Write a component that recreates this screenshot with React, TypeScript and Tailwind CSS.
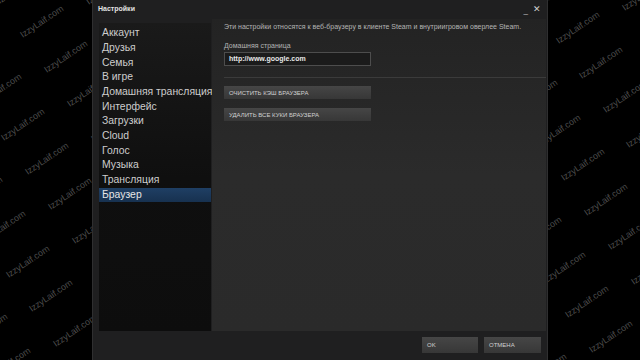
import React from 'react';

const NAV = [
  'Аккаунт',
  'Друзья',
  'Семья',
  'В игре',
  'Домашняя трансляция',
  'Интерфейс',
  'Загрузки',
  'Cloud',
  'Голос',
  'Музыка',
  'Трансляция',
  'Браузер',
];

// watermark lattice, measured from the screenshot
const marks: { x: number; y: number }[] = [];
for (let i = -14; i <= 14; i++) {
  for (let j = -3; j <= 9; j++) {
    const x = 42 + i * 23.5 + j * 89.3;
    const y = 22 + i * 34.5 + j * 1;
    if (x > -50 && x < 690 && y > -30 && y < 390) marks.push({ x, y });
  }
}

const Watermarks: React.FC = () => (
  <>
    {marks.map((m, idx) => (
      <div
        key={idx}
        className="absolute text-[9px] leading-none text-[#4e4e4e] whitespace-nowrap"
        style={{ left: m.x, top: m.y, transform: 'translate(-50%, -50%) rotate(-34deg)' }}
      >
        IzzyLaif.com
      </div>
    ))}
  </>
);

const GreyButton: React.FC<{ label: string; className?: string }> = ({ label, className }) => (
  <div
    className={`flex items-center bg-gradient-to-b from-[#464646] to-[#373737] text-[#d0d0d0] text-[6px] leading-none uppercase ${className ?? ''}`}
  >
    {label}
  </div>
);

export default function App() {
  return (
    <div className="relative w-[640px] h-[360px] bg-black overflow-hidden font-['Liberation_Sans',Arial,sans-serif]">
      <Watermarks />

      <div className="relative flex h-full pl-[92px]">
        <div className="w-[456px] h-full flex flex-col bg-[#1f1f20] border-l border-r border-[#2f2f30]">
          {/* title bar */}
          <div className="h-[19px] flex items-center justify-between pl-[5px] pr-[6px]">
            <span className="text-[7px] font-bold text-[#e2e2e2]">Настройки</span>
            <div className="flex items-center gap-[5px] text-[#cfcfcf]">
              <span className="text-[8px] leading-none mt-[3px]">_</span>
              <span className="text-[9px] leading-none">✕</span>
            </div>
          </div>

          {/* body */}
          <div className="flex-1 flex pl-[6px] pr-[1px]">
            <div className="w-[112px] mt-[4px] bg-gradient-to-b from-[#1a1a1a] via-[#0f0f0f] to-[#0d0d0d] pt-[3px]">
              {NAV.map((item) => (
                <div
                  key={item}
                  className={`h-[14.7px] flex items-center pl-[3px] text-[10.4px] leading-none whitespace-nowrap ${
                    item === 'Браузер'
                      ? 'bg-gradient-to-b from-[#1f3f64] to-[#17314f] text-[#e6e6e6]'
                      : 'text-[#cdcdcd]'
                  }`}
                >
                  {item}
                </div>
              ))}
            </div>

            <div className="flex-1 ml-[1px] bg-gradient-to-b from-[#232323] via-[#2b2b2b] to-[#2a2a2a] pt-[4px] pl-[12px] flex flex-col">
              <p className="text-[7px] leading-[8px] text-[#b4b4b4] whitespace-nowrap">
                Эти настройки относятся к веб-браузеру в клиенте Steam и внутриигровом оверлее Steam.
              </p>
              <p className="mt-[11px] text-[7px] leading-[8px] text-[#b4b4b4]">Домашняя страница</p>
              <div className="mt-[2px] w-[147px] h-[14px] flex items-center pl-[4px] bg-[#1b1b1b] border border-[#4d4d4d] text-[7px] font-bold text-[#e8e8e8]">
                http://www.google.com
              </div>
              <div className="mt-[11px] h-px bg-[#3b3b3b]" />
              <GreyButton label="Очистить кэш браузера" className="mt-[8px] w-[147px] h-[13px] pl-[5px]" />
              <GreyButton label="Удалить все куки браузера" className="mt-[9px] w-[147px] h-[13px] pl-[5px]" />
            </div>
          </div>

          {/* footer */}
          <div className="h-[29px] flex justify-end gap-[6px] pt-[6px] pr-[6px]">
            <GreyButton label="OK" className="w-[56px] h-[16px] pl-[5px]" />
            <GreyButton label="Отмена" className="w-[57px] h-[16px] pl-[5px]" />
          </div>
        </div>
      </div>
    </div>
  );
}
